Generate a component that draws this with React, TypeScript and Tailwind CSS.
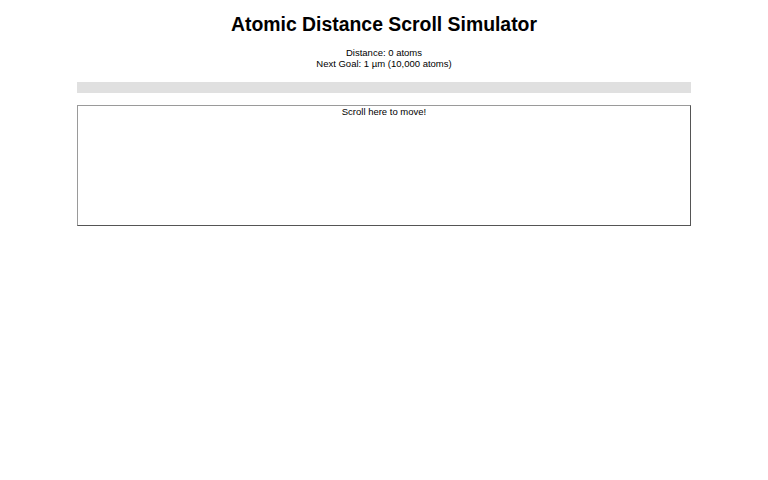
import { useState } from 'react';

const ATOMS_PER_MICRON = 10000;

export default function App() {
  const [distance, setDistance] = useState(0);
  const progress = Math.min(100, (distance / ATOMS_PER_MICRON) * 100);

  return (
    <div className="min-h-screen bg-white text-black font-['Liberation_Sans',Arial,sans-serif]">
      <div className="mx-auto w-[614px] text-center">
        <h1 className="pt-[13px] text-[19.4px] font-bold leading-[22px]">Atomic Distance Scroll Simulator</h1>

        <div className="mt-[12px] text-[9.5px] leading-[11px]">
          <div>Distance: {distance.toLocaleString()} atoms</div>
          <div>Next Goal: 1 µm (10,000 atoms)</div>
        </div>

        <div className="mt-[13px] h-[11px] w-full bg-[#e0e0e0]">
          <div className="h-full bg-[#4caf50]" style={{ width: `${progress}%` }} />
        </div>

        <div
          className="mt-[12px] h-[121px] overflow-y-auto border border-t-[#9a9a9a] border-l-[#9a9a9a] border-r-[#555] border-b-[#555] text-[9.5px] leading-[11px]"
          onWheel={(e) => setDistance((d) => Math.max(0, d + Math.round(Math.abs(e.deltaY))))}
        >
          <div>Scroll here to move!</div>
        </div>
      </div>
    </div>
  );
}
